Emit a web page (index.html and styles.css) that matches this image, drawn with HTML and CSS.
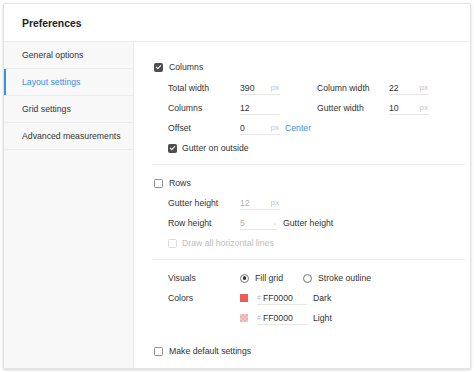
FILE: index.html
```html
<!DOCTYPE html>
<html lang="en">
  <head>
    <meta charset="UTF-8" />
    <meta name="viewport" content="width=device-width, initial-scale=1.0" />
    <title>Preferences</title>
    <link rel="stylesheet" href="styles.css">
  </head>

  <body>
    <div class="window">
      <div class="header">Preferences</div>
      <div class="body">
        <div class="sidebar">
          <div class="nav_item">General options</div>
          <div class="nav_item active">Layout settings</div>
          <div class="nav_item">Grid settings</div>
          <div class="nav_item">Advanced measurements</div>
        </div>

        <div class="main">
          <div class="section">
            <div class="check_row first">
              <span class="check checked"></span>
              <span>Columns</span>
            </div>
            <div class="row">
              <span class="label">Total width</span>
              <span class="field"><span>390</span><span class="unit">px</span></span>
              <span class="label second">Column width</span>
              <span class="field"><span>22</span><span class="unit">px</span></span>
            </div>
            <div class="row">
              <span class="label">Columns</span>
              <span class="field"><span>12</span></span>
              <span class="label second">Gutter width</span>
              <span class="field"><span>10</span><span class="unit">px</span></span>
            </div>
            <div class="row">
              <span class="label">Offset</span>
              <span class="field"><span>0</span><span class="unit">px</span></span>
              <span class="link">Center</span>
            </div>
            <div class="row">
              <span class="check checked"></span>
              <span>Gutter on outside</span>
            </div>
          </div>

          <div class="section">
            <div class="check_row">
              <span class="check"></span>
              <span>Rows</span>
            </div>
            <div class="row">
              <span class="label">Gutter height</span>
              <span class="field muted"><span>12</span><span class="unit">px</span></span>
            </div>
            <div class="row">
              <span class="label">Row height</span>
              <span class="field short muted"><span>5</span><span class="unit">x</span></span>
              <span class="after">Gutter height</span>
            </div>
            <div class="row disabled">
              <span class="check"></span>
              <span>Draw all horizontal lines</span>
            </div>
          </div>

          <div class="section last">
            <div class="row">
              <span class="label">Visuals</span>
              <span class="radio on"></span>
              <span class="radio_text">Fill grid</span>
              <span class="radio"></span>
              <span class="radio_text">Stroke outline</span>
            </div>
            <div class="row">
              <span class="label">Colors</span>
              <span class="swatch"></span>
              <span class="field hex"><span class="hash">#</span><span>FF0000</span></span>
              <span class="after">Dark</span>
            </div>
            <div class="row">
              <span class="label"></span>
              <span class="swatch light"></span>
              <span class="field hex"><span class="hash">#</span><span>FF0000</span></span>
              <span class="after">Light</span>
            </div>
          </div>

          <div class="check_row default">
            <span class="check"></span>
            <span>Make default settings</span>
          </div>
        </div>
      </div>
    </div>
  </body>
</html>
```

FILE: styles.css
```css
html,
body {
  margin: 0;
  padding: 0;
  background-color: #ffffff;
  font-family: "Liberation Sans", Arial, sans-serif;
  font-size: 8.7px;
  color: #333333;
}

body {
  padding: 3px;
}

.window {
  width: 468px;
  height: 366px;
  box-sizing: border-box;
  border: 1px solid #e4e4e4;
  border-radius: 2px;
  box-shadow: 0 1px 3px rgba(0, 0, 0, 0.18);
  background-color: #ffffff;
  display: flex;
  flex-direction: column;
  overflow: hidden;
}

.header {
  height: 38px;
  flex-shrink: 0;
  box-sizing: border-box;
  padding: 2px 0 0 18px;
  display: flex;
  align-items: center;
  border-bottom: 1px solid #ededed;
  font-size: 10.4px;
  font-weight: bold;
  color: #222222;
}

.body {
  flex: 1;
  display: flex;
}

.sidebar {
  width: 130px;
  box-sizing: border-box;
  background-color: #f8f8f8;
  border-right: 1px solid #ebebeb;
}

.nav_item {
  height: 27px;
  box-sizing: border-box;
  padding-left: 18px;
  display: flex;
  align-items: center;
  border-bottom: 1px solid #ececec;
  color: #333333;
}

.nav_item.active {
  color: #3b8fe0;
  box-shadow: inset 2px 0 0 #3b8fe0;
}

.main {
  flex: 1;
  padding: 15px 5px 0 18px;
}

.section {
  border-bottom: 1px solid #eeeeee;
  padding: 0 0 6px;
}

.section + .section {
  padding-top: 8px;
}

.section.last {
  border-bottom: none;
}

.check_row {
  height: 20px;
  display: flex;
  align-items: center;
  gap: 6px;
  padding-left: 2px;
}

.check_row.first {
  margin-bottom: 1px;
}

.check_row.default {
  margin-top: 7px;
}

.row {
  height: 20px;
  display: flex;
  align-items: center;
  padding-left: 16px;
}

.row .check {
  margin-right: 5px;
}

.label {
  width: 72px;
  flex-shrink: 0;
}

.label.second {
  margin-left: 37px;
}

.field {
  width: 40px;
  height: 13px;
  box-sizing: border-box;
  border-bottom: 1px solid #e6e6e6;
  display: flex;
  align-items: center;
  justify-content: space-between;
  padding-right: 1px;
}

.field.short {
  width: 37px;
}

.field.muted {
  color: #b4b4b4;
}

.unit {
  color: #c4c4c4;
  font-size: 8px;
}

.field.short .unit {
  color: #e0e0e0;
  font-size: 5px;
  margin-top: 3px;
}

.field.hex {
  width: 50px;
  justify-content: flex-start;
  margin-left: 9px;
}

.hash {
  color: #b8b8b8;
  font-size: 7px;
  margin-right: 2px;
}

.link {
  color: #3b8fe0;
  margin-left: 5px;
}

.after {
  margin-left: 6px;
}

.check {
  width: 9px;
  height: 9px;
  box-sizing: border-box;
  border: 1px solid #8e8e8e;
  border-radius: 1.5px;
  background-color: #ffffff;
  flex-shrink: 0;
  position: relative;
}

.check.checked {
  background-color: #4e4e4e;
  border-color: #4e4e4e;
}

.check.checked::after {
  content: "";
  position: absolute;
  left: 2px;
  top: 0.5px;
  width: 2px;
  height: 4px;
  border: solid #ffffff;
  border-width: 0 1.2px 1.2px 0;
  transform: rotate(45deg);
}

.disabled {
  color: #bdbdbd;
}

.disabled .check {
  border-color: #dddddd;
}

.radio {
  width: 9px;
  height: 9px;
  box-sizing: border-box;
  border: 1px solid #777777;
  border-radius: 50%;
  flex-shrink: 0;
  display: flex;
  align-items: center;
  justify-content: center;
}

.radio.on::after {
  content: "";
  width: 3.5px;
  height: 3.5px;
  border-radius: 50%;
  background-color: #333333;
}

.radio_text {
  margin: 0 20px 0 6px;
}

.swatch {
  width: 8px;
  height: 8px;
  background-color: #f05a5a;
  flex-shrink: 0;
}

.swatch.light {
  background-color: #f5c4c4;
  background-image: linear-gradient(45deg, #f0b0b0 25%, transparent 25%, transparent 75%, #f0b0b0 75%),
    linear-gradient(45deg, #f0b0b0 25%, transparent 25%, transparent 75%, #f0b0b0 75%);
  background-size: 4px 4px;
  background-position: 0 0, 2px 2px;
}
```
